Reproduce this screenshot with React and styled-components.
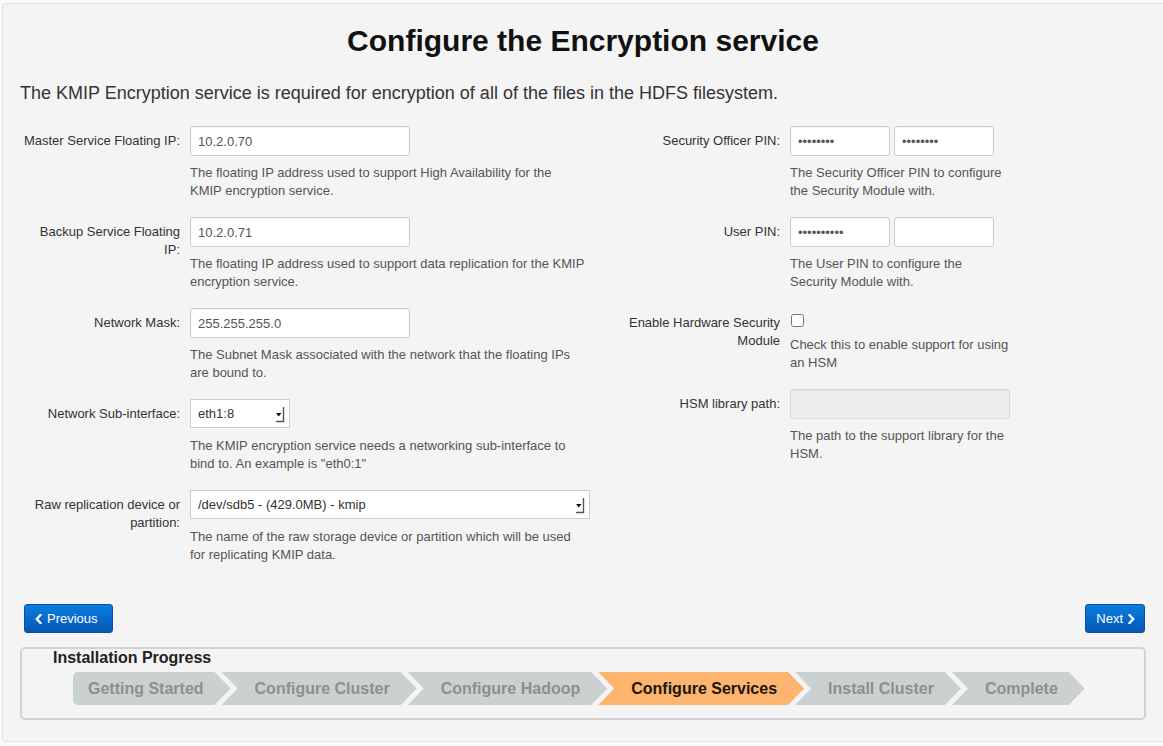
import React from 'react';
import styled, { createGlobalStyle } from 'styled-components';

const GlobalStyle = createGlobalStyle`
  html, body { margin: 0; padding: 0; background: #fafafa; }
  body { font-family: "Liberation Sans", Arial, sans-serif; color: #333; }
  * { box-sizing: border-box; }
`;

const Page = styled.div`
  margin: 3px 0 0 2px;
  height: 739px;
  border: 1px solid #e2e2e2;
  border-right: none;
  border-radius: 4px 0 0 4px;
  background: #f4f4f4;
  display: flex;
  flex-direction: column;
`;

const Title = styled.h1`
  margin: 20px 0 0;
  font-size: 30px;
  line-height: 34px;
  font-weight: bold;
  text-align: center;
  color: #111;
`;

const Lead = styled.p`
  margin: 25px 0 0 17px;
  font-size: 18px;
  line-height: 20px;
  color: #333;
`;

const Form = styled.div`
  display: flex;
  margin-top: 23px;
  padding-left: 19px;
`;

const Column = styled.div`
  width: ${(p) => (p.$width ? `${p.$width}px` : 'auto')};
  flex: ${(p) => (p.$width ? 'none' : '1')};
  display: flex;
  flex-direction: column;
`;

const FieldRow = styled.div`
  display: grid;
  grid-template-columns: 158px 1fr;
  column-gap: 10px;
  margin-bottom: 17px;
`;

const Label = styled.label`
  text-align: right;
  font-size: 13px;
  line-height: 18px;
  padding-top: 6px;
  color: #333;
`;

const Field = styled.div`
  display: flex;
  flex-direction: column;
  align-items: flex-start;
`;

const Help = styled.div`
  margin-top: ${(p) => p.$top || 8}px;
  width: ${(p) => p.$width}px;
  font-size: 13px;
  line-height: 18px;
  color: #555;
`;

const TextInput = styled.input`
  width: ${(p) => p.$width}px;
  height: 30px;
  border: 1px solid ${(p) => (p.disabled ? '#dcdcdc' : '#ccc')};
  border-radius: 3px;
  padding: 0 7px;
  font-family: "Liberation Sans", Arial, sans-serif;
  font-size: 13px;
  color: #555;
  background: ${(p) => (p.disabled ? '#eee' : '#fff')};
  box-shadow: inset 0 1px 1px rgba(0, 0, 0, 0.06);
  outline: none;
`;

const InputGroup = styled.div`
  display: flex;
  gap: 4px;
`;

const SelectWrap = styled.div`
  position: relative;
  width: ${(p) => p.$width}px;
  height: 29px;
`;

const Select = styled.select`
  appearance: none;
  -webkit-appearance: none;
  width: 100%;
  height: 100%;
  border: 1px solid #ccc;
  border-radius: 0;
  background: #fff;
  padding: 0 24px 0 7px;
  font-family: "Liberation Sans", Arial, sans-serif;
  font-size: 13px;
  color: #333;
  outline: none;
`;

const ArrowIcon = styled.svg`
  position: absolute;
  right: 4px;
  top: 6px;
  pointer-events: none;
`;

const Checkbox = styled.input`
  width: 13px;
  height: 13px;
  margin: 6px 0 1px 1px;
`;

const Nav = styled.div`
  display: flex;
  justify-content: space-between;
  margin-top: 23px;
  padding: 0 18px 0 21px;
`;

const NavButton = styled.button`
  display: inline-flex;
  align-items: center;
  gap: 5px;
  height: 29px;
  padding: 0 ${(p) => p.$right}px 0 ${(p) => p.$left}px;
  border: 1px solid #0a50a0;
  border-radius: 3px;
  background: linear-gradient(#0b7de0, #0558b4);
  color: #fff;
  font-family: "Liberation Sans", Arial, sans-serif;
  font-size: 13px;
  cursor: pointer;
`;

const Chevron = styled.svg`
  display: block;
`;

const Progress = styled.div`
  margin: 14px 17px 0 17px;
  border: 2px solid #d3d3d3;
  border-radius: 5px;
  padding-bottom: 13px;
`;

const ProgressTitle = styled.div`
  padding-left: 31px;
  font-size: 16px;
  line-height: 18px;
  font-weight: bold;
  color: #222;
`;

const Steps = styled.div`
  display: flex;
  margin: 5px 0 0 51px;
`;

const Step = styled.div`
  display: flex;
  align-items: center;
  height: 33px;
  padding: 0 27px 0 ${(p) => (p.$first ? 15 : 33)}px;
  margin-left: ${(p) => (p.$first ? 0 : -9)}px;
  font-size: 16px;
  font-weight: bold;
  white-space: nowrap;
  background: ${(p) => (p.$active ? '#fcb46e' : '#cbd1d1')};
  color: ${(p) => (p.$active ? '#1e1408' : '#8b9090')};
  border-radius: ${(p) => (p.$first ? '5px 0 0 5px' : '0')};
  clip-path: ${(p) =>
    p.$first
      ? 'polygon(0 0, calc(100% - 16px) 0, 100% 50%, calc(100% - 16px) 100%, 0 100%)'
      : 'polygon(0 0, calc(100% - 16px) 0, 100% 50%, calc(100% - 16px) 100%, 0 100%, 16px 50%)'};
`;

const SelectArrow = () => (
  <ArrowIcon width="12" height="18" viewBox="0 0 12 18">
    <polygon points="2,8 7.5,8 4.75,11.5" fill="#111" />
    <path d="M9.5 2 V16.5 H2" fill="none" stroke="#555" strokeWidth="1.4" />
  </ArrowIcon>
);

const ChevronIcon = ({ dir }) => (
  <Chevron width="7" height="10" viewBox="0 0 7 10">
    <path
      d={dir === 'left' ? 'M5.5 1 L1.8 5 L5.5 9' : 'M1.5 1 L5.2 5 L1.5 9'}
      fill="none"
      stroke="#fff"
      strokeWidth="2.3"
      strokeLinecap="square"
    />
  </Chevron>
);

const Dropdown = ({ width, value }) => (
  <SelectWrap $width={width}>
    <Select defaultValue={value}>
      <option value={value}>{value}</option>
    </Select>
    <SelectArrow />
  </SelectWrap>
);

const steps = [
  'Getting Started',
  'Configure Cluster',
  'Configure Hadoop',
  'Configure Services',
  'Install Cluster',
  'Complete',
];

export default function App() {
  return (
    <>
      <GlobalStyle />
      <Page>
        <Title>Configure the Encryption service</Title>
        <Lead>
          The KMIP Encryption service is required for encryption of all of the files in the HDFS filesystem.
        </Lead>
        <Form>
          <Column $width={600}>
            <FieldRow>
              <Label>Master Service Floating IP:</Label>
              <Field>
                <TextInput $width={220} defaultValue="10.2.0.70" />
                <Help $width={396}>
                  The floating IP address used to support High Availability for the KMIP encryption service.
                </Help>
              </Field>
            </FieldRow>
            <FieldRow>
              <Label>Backup Service Floating IP:</Label>
              <Field>
                <TextInput $width={220} defaultValue="10.2.0.71" />
                <Help $width={396}>
                  The floating IP address used to support data replication for the KMIP encryption service.
                </Help>
              </Field>
            </FieldRow>
            <FieldRow>
              <Label>Network Mask:</Label>
              <Field>
                <TextInput $width={220} defaultValue="255.255.255.0" />
                <Help $width={396}>
                  The Subnet Mask associated with the network that the floating IPs are bound to.
                </Help>
              </Field>
            </FieldRow>
            <FieldRow>
              <Label>Network Sub-interface:</Label>
              <Field>
                <Dropdown width={100} value="eth1:8" />
                <Help $width={396} $top={9}>
                  The KMIP encryption service needs a networking sub-interface to bind to. An example is "eth0:1"
                </Help>
              </Field>
            </FieldRow>
            <FieldRow>
              <Label>Raw replication device or partition:</Label>
              <Field>
                <Dropdown width={400} value="/dev/sdb5 - (429.0MB) - kmip" />
                <Help $width={396} $top={9}>
                  The name of the raw storage device or partition which will be used for replicating KMIP data.
                </Help>
              </Field>
            </FieldRow>
          </Column>
          <Column>
            <FieldRow>
              <Label>Security Officer PIN:</Label>
              <Field>
                <InputGroup>
                  <TextInput $width={100} type="password" defaultValue="12345678" />
                  <TextInput $width={100} type="password" defaultValue="12345678" />
                </InputGroup>
                <Help $width={220}>The Security Officer PIN to configure the Security Module with.</Help>
              </Field>
            </FieldRow>
            <FieldRow>
              <Label>User PIN:</Label>
              <Field>
                <InputGroup>
                  <TextInput $width={100} type="password" defaultValue="1234567890" />
                  <TextInput $width={100} type="password" defaultValue="" />
                </InputGroup>
                <Help $width={220}>The User PIN to configure the Security Module with.</Help>
              </Field>
            </FieldRow>
            <FieldRow>
              <Label>Enable Hardware Security Module</Label>
              <Field>
                <Checkbox type="checkbox" />
                <Help $width={220}>Check this to enable support for using an HSM</Help>
              </Field>
            </FieldRow>
            <FieldRow>
              <Label>HSM library path:</Label>
              <Field>
                <TextInput $width={220} disabled />
                <Help $width={220}>The path to the support library for the HSM.</Help>
              </Field>
            </FieldRow>
          </Column>
        </Form>
        <Nav>
          <NavButton $left={10} $right={14}>
            <ChevronIcon dir="left" />
            Previous
          </NavButton>
          <NavButton $left={10} $right={9}>
            Next
            <ChevronIcon dir="right" />
          </NavButton>
        </Nav>
        <Progress>
          <ProgressTitle>Installation Progress</ProgressTitle>
          <Steps>
            {steps.map((s, i) => (
              <Step key={s} $first={i === 0} $active={s === 'Configure Services'}>
                {s}
              </Step>
            ))}
          </Steps>
        </Progress>
      </Page>
    </>
  );
}
